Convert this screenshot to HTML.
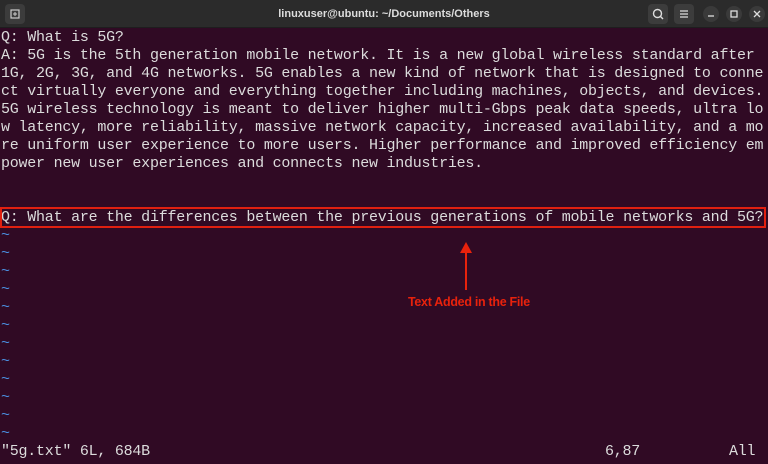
<!DOCTYPE html>
<html><head><style>
*{margin:0;padding:0;box-sizing:border-box}
body{width:768px;height:464px;overflow:hidden;background:#300a24;position:relative;font-family:"Liberation Sans",sans-serif}
.tb{position:absolute;left:0;top:0;width:768px;height:28px;background:#2b2b2b;border-bottom:1px solid #1e1e1e}
.title{position:absolute;top:0;left:0;width:768px;text-align:center;line-height:28px;color:#ddd;font-size:11px;font-weight:bold}
.btn{position:absolute;top:4px;width:20px;height:20px;border-radius:4px;background:#3c3c3c}
.cb{position:absolute;top:6px;width:16px;height:16px;border-radius:50%;background:#3a3a3a;color:#ddd;font-size:9px;text-align:center;line-height:16px}
pre{position:absolute;left:1px;top:29px;font-family:"Liberation Mono",monospace;font-size:15px;letter-spacing:-0.24px;line-height:18px;color:#dcdcdc}
.t{color:#4a8fe0}
.box{position:absolute;left:0;top:207px;width:766px;height:21px;border:2px solid #e02010}
.arr{position:absolute;left:465px;top:252px;width:2px;height:38px;background:#e8220c}
.head{position:absolute;left:460px;top:242px;width:0;height:0;border-left:6px solid transparent;border-right:6px solid transparent;border-bottom:11px solid #e8220c}
.lab{position:absolute;left:408px;top:295px;color:#e8220c;font-weight:bold;font-size:12.5px;letter-spacing:-0.3px}
.st{position:absolute;top:443px;font-family:"Liberation Mono",monospace;font-size:15px;letter-spacing:-0.24px;color:#dcdcdc}
</style></head><body>
<div class="tb">
<div class="btn" style="left:5px;top:4px"><svg width="20" height="20"><rect x="6" y="6" width="8" height="8" fill="none" stroke="#ccc" stroke-width="1.2"/><line x1="10" y1="8" x2="10" y2="12" stroke="#ccc"/><line x1="8" y1="10" x2="12" y2="10" stroke="#ccc"/></svg></div>
<div class="title">linuxuser@ubuntu: ~/Documents/Others</div>
<div class="btn" style="left:648px"><svg width="20" height="20"><circle cx="9.5" cy="9.5" r="4" fill="none" stroke="#ddd" stroke-width="1.4"/><line x1="12.5" y1="12.5" x2="15" y2="15" stroke="#ddd" stroke-width="1.4"/></svg></div>
<div class="btn" style="left:674px"><svg width="20" height="20"><path d="M6 7h8M6 10h8M6 13h8" stroke="#ddd" stroke-width="1.3"/></svg></div>
<div class="cb" style="left:703px"><svg width="16" height="16"><line x1="5" y1="10" x2="11" y2="10" stroke="#ddd" stroke-width="1.3"/></svg></div>
<div class="cb" style="left:726px"><svg width="16" height="16"><rect x="5" y="5" width="6" height="6" fill="none" stroke="#ddd" stroke-width="1.3"/></svg></div>
<div class="cb" style="left:749px"><svg width="16" height="16"><path d="M5 5l6 6M11 5l-6 6" stroke="#ddd" stroke-width="1.3"/></svg></div>
</div>
<pre>Q: What is 5G?
A: 5G is the 5th generation mobile network. It is a new global wireless standard after
1G, 2G, 3G, and 4G networks. 5G enables a new kind of network that is designed to conne
ct virtually everyone and everything together including machines, objects, and devices.
5G wireless technology is meant to deliver higher multi-Gbps peak data speeds, ultra lo
w latency, more reliability, massive network capacity, increased availability, and a mo
re uniform user experience to more users. Higher performance and improved efficiency em
power new user experiences and connects new industries.


Q: What are the differences between the previous generations of mobile networks and 5G?
<span class="t">~
~
~
~
~
~
~
~
~
~
~
~</span></pre>
<div class="st" style="left:1px">"5g.txt" 6L, 684B</div>
<div class="st" style="left:605px">6,87</div>
<div class="st" style="left:729px">All</div>
<div class="box"></div>
<div class="head"></div><div class="arr"></div>
<div class="lab">Text Added in the File</div>
</body></html>
